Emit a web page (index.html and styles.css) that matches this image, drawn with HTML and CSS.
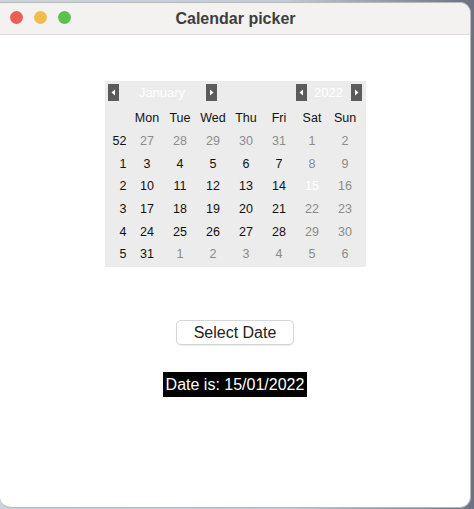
FILE: index.html
```html
<!DOCTYPE html>
<html>
<head>
<meta charset="utf-8">
<link rel="stylesheet" href="styles.css">
</head>
<body>
<div class="window">
  <div class="titlebar">
    <div class="lights">
      <span class="light red"></span>
      <span class="light yellow"></span>
      <span class="light green"></span>
    </div>
    <div class="title">Calendar picker</div>
  </div>
  <div class="content">
    <div class="calendar">
      <div class="cal-head">
        <div class="group">
          <span class="arrow"><svg width="11" height="17" viewBox="0 0 11 17"><path d="M7 5.5 L3.5 8.5 L7 11.5 Z" fill="#fff"/></svg></span>
          <span class="month">January</span>
          <span class="arrow"><svg width="11" height="17" viewBox="0 0 11 17"><path d="M4 5.5 L7.5 8.5 L4 11.5 Z" fill="#fff"/></svg></span>
        </div>
        <div class="group">
          <span class="arrow"><svg width="11" height="17" viewBox="0 0 11 17"><path d="M7 5.5 L3.5 8.5 L7 11.5 Z" fill="#fff"/></svg></span>
          <span class="year">2022</span>
          <span class="arrow"><svg width="11" height="17" viewBox="0 0 11 17"><path d="M4 5.5 L7.5 8.5 L4 11.5 Z" fill="#fff"/></svg></span>
        </div>
      </div>
      <div class="grid">
        <span class="wk"></span><span class="dn">Mon</span><span class="dn">Tue</span><span class="dn">Wed</span><span class="dn">Thu</span><span class="dn">Fri</span><span class="dn">Sat</span><span class="dn">Sun</span>
        <span class="wk">52</span><span class="d o">27</span><span class="d o">28</span><span class="d o">29</span><span class="d o">30</span><span class="d o">31</span><span class="d o">1</span><span class="d o">2</span>
        <span class="wk">1</span><span class="d">3</span><span class="d">4</span><span class="d">5</span><span class="d">6</span><span class="d">7</span><span class="d o">8</span><span class="d o">9</span>
        <span class="wk">2</span><span class="d">10</span><span class="d">11</span><span class="d">12</span><span class="d">13</span><span class="d">14</span><span class="d sel">15</span><span class="d o">16</span>
        <span class="wk">3</span><span class="d">17</span><span class="d">18</span><span class="d">19</span><span class="d">20</span><span class="d">21</span><span class="d o">22</span><span class="d o">23</span>
        <span class="wk">4</span><span class="d">24</span><span class="d">25</span><span class="d">26</span><span class="d">27</span><span class="d">28</span><span class="d o">29</span><span class="d o">30</span>
        <span class="wk">5</span><span class="d">31</span><span class="d o">1</span><span class="d o">2</span><span class="d o">3</span><span class="d o">4</span><span class="d o">5</span><span class="d o">6</span>
      </div>
    </div>
    <button class="btn">Select Date</button>
    <div class="result">Date is: 15/01/2022</div>
  </div>
</div>
</body>
</html>
```
FILE: styles.css
```css
html, body {
  margin: 0;
  padding: 0;
  height: 509px;
  overflow: hidden;
}
body {
  background: linear-gradient(90deg, #cdd3dc 0%, #c4ccd8 60%, #6b7280 100%);
  font-family: "Liberation Sans", Arial, sans-serif;
}
.window {
  margin-top: 2px;
  width: 470px;
  height: 504px;
  background: #ffffff;
  border: 1px solid #b9b9b9;
  border-left: none;
  border-radius: 0 11px 11px 11px;
  overflow: hidden;
  display: flex;
  flex-direction: column;
}
.titlebar {
  height: 31px;
  background: #f4f2f1;
  border-bottom: 1px solid #dedcdb;
  position: relative;
  display: flex;
  align-items: center;
  justify-content: center;
  flex-shrink: 0;
}
.lights {
  position: absolute;
  left: 10px;
  top: 8px;
  display: flex;
  gap: 11px;
}
.light {
  width: 13px;
  height: 13px;
  border-radius: 50%;
  display: block;
}
.red { background: #ec5f57; }
.yellow { background: #f4bc4c; }
.green { background: #5cc14d; }
.title {
  font-weight: bold;
  font-size: 16px;
  color: #3e3e3e;
  margin-top: 0;
  margin-left: 1px;
}
.content {
  display: flex;
  flex-direction: column;
  align-items: center;
  padding-top: 46px;
}
.calendar {
  width: 261px;
  height: 186px;
  background: #ececec;
  box-sizing: border-box;
  padding: 3px 4px 0 0;
}
.cal-head {
  height: 17px;
  display: flex;
  justify-content: space-between;
  align-items: center;
  padding-left: 3px;
}
.group {
  display: flex;
  align-items: center;
}
.arrow {
  width: 11px;
  height: 17px;
  background: #5b5b5b;
  display: block;
}
.arrow svg { display: block; }
.month, .year {
  color: #ffffff;
  font-size: 13px;
  text-align: center;
  line-height: 17px;
}
.month { width: 87px; }
.year { width: 44px; }
.grid {
  margin-top: 6px;
  display: grid;
  grid-template-columns: 26px repeat(7, 33px);
  grid-auto-rows: 22.7px;
  align-items: center;
  font-size: 12.5px;
  color: #111111;
}
.wk {
  text-align: right;
  padding-right: 4px;
}
.dn, .d {
  text-align: center;
}
.o { color: #8b8b8b; }
.sel { color: #ffffff; }
.btn {
  margin-top: 53px;
  width: 118px;
  height: 25px;
  background: #ffffff;
  border: 1px solid #d6d6d6;
  border-radius: 5px;
  box-shadow: 0 1px 1px rgba(0,0,0,0.08);
  font-family: "Liberation Sans", Arial, sans-serif;
  font-size: 16px;
  color: #222222;
  padding: 0;
}
.result {
  margin-top: 27px;
  background: #000000;
  color: #ffffff;
  font-size: 16px;
  height: 25px;
  line-height: 25px;
  padding: 0 3px;
}
```
